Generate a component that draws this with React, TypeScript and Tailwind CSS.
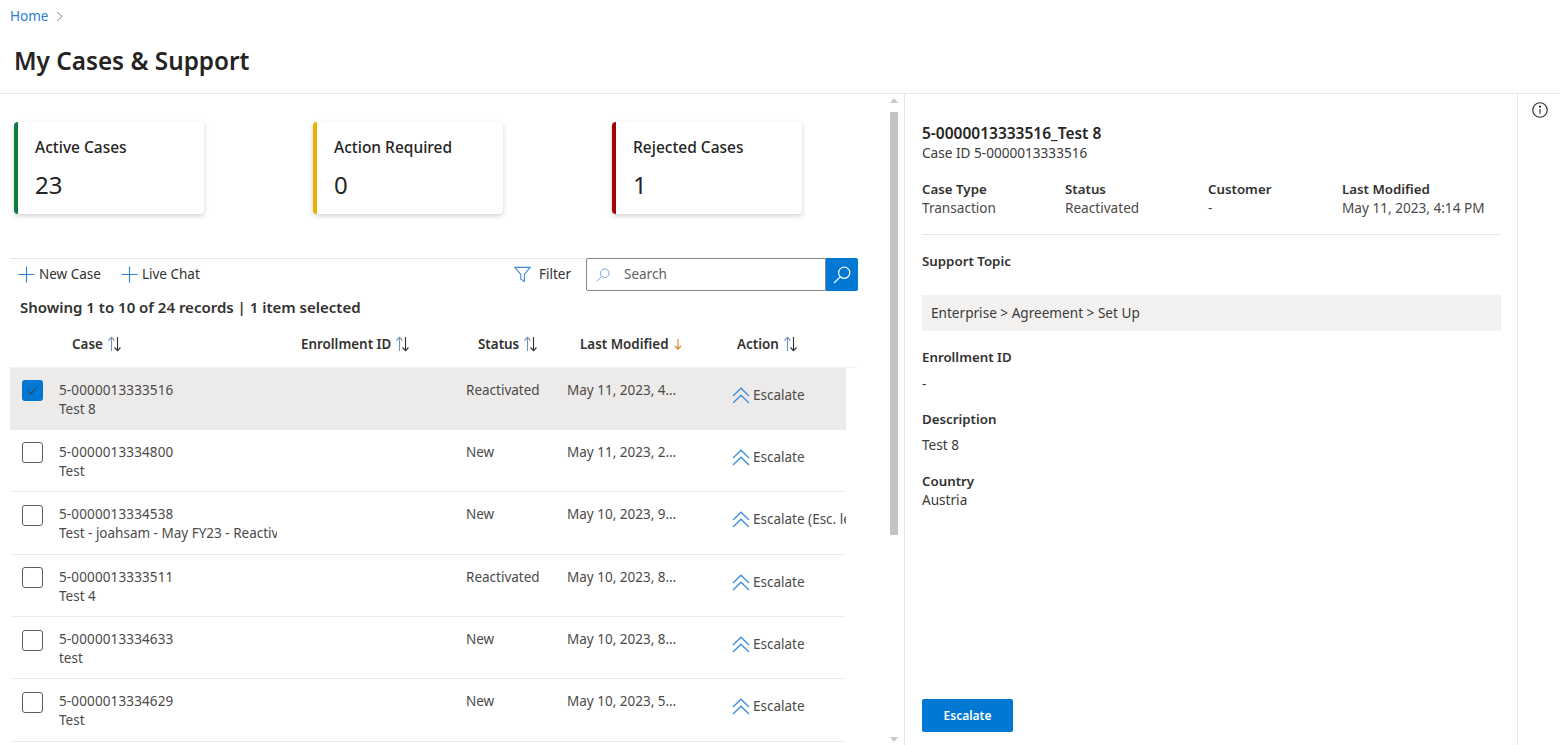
function Plus() {
  return (
    <svg width="17" height="17" viewBox="0 0 17 17" className="shrink-0" fill="none" stroke="#2f7fd6" strokeWidth="1.1">
      <path d="M0.5 8.5H16.5M8.5 0.5V16.5" />
    </svg>
  );
}
function Sort() {
  return (
    <svg width="15" height="16" viewBox="0 0 15 16" className="shrink-0" fill="none" strokeWidth="1.1">
      <path d="M4.5 15V1.5M1.5 4.5L4.5 1.3L7.5 4.5" stroke="#6f94b8" />
      <path d="M10.5 1V14.5M7.5 11.5L10.5 14.7L13.5 11.5" stroke="#323130" />
    </svg>
  );
}
function Chevrons() {
  return (
    <svg width="18" height="17" viewBox="0 0 18 17" className="shrink-0" fill="none" stroke="#3f8ddd" strokeWidth="1.3">
      <path d="M1 9L9 1.2L17 9M1 16L9 8.2L17 16" />
    </svg>
  );
}
function SearchGlyph({ color, size }: { color: string; size: number }) {
  return (
    <svg width={size} height={size} viewBox="0 0 18 18" className="shrink-0" fill="none" stroke={color} strokeWidth="1.2">
      <circle cx="11.2" cy="6.8" r="5.6" />
      <path d="M7.2 10.8L1 17" />
    </svg>
  );
}
function Head({ label, orange }: { label: string; orange?: boolean }) {
  return (
    <div className="flex items-center gap-[4px]">
      <span>{label}</span>
      {orange ? (
        <svg width="10" height="14" viewBox="0 0 10 14" fill="none" stroke="#d9822b" strokeWidth="1.1" className="shrink-0">
          <path d="M5 2V12M2 9L5 12.2L8 9" />
        </svg>
      ) : (
        <Sort />
      )}
    </div>
  );
}
function StatCard({ title, value, bar }: { title: string; value: string; bar: string }) {
  return (
    <div className={`w-[190px] h-[92px] bg-white rounded-[4px] border-l-[4px] ${bar} shadow-[0_2px_5px_rgba(0,0,0,0.18)] pl-[17px] pt-[15px]`}>
      <div className="text-[15.5px] leading-[20px] font-medium text-[#252423]">{title}</div>
      <div className="text-[24px] leading-[32px] mt-[12px] text-[#252423]">{value}</div>
    </div>
  );
}
const rows = [
  { id: "5-0000013333516", sub: "Test 8", status: "Reactivated", date: "May 11, 2023, 4:14 PM", action: "Escalate", selected: true },
  { id: "5-0000013334800", sub: "Test", status: "New", date: "May 11, 2023, 2:10 PM", action: "Escalate" },
  { id: "5-0000013334538", sub: "Test - joahsam - May FY23 - Reactivated", status: "New", date: "May 10, 2023, 9:21 PM", action: "Escalate (Esc. level 1)" },
  { id: "5-0000013333511", sub: "Test 4", status: "Reactivated", date: "May 10, 2023, 8:45 PM", action: "Escalate" },
  { id: "5-0000013334633", sub: "test", status: "New", date: "May 10, 2023, 8:02 PM", action: "Escalate" },
  { id: "5-0000013334629", sub: "Test", status: "New", date: "May 10, 2023, 5:37 PM", action: "Escalate" },
];
function Row({ r }: { r: (typeof rows)[number] }) {
  return (
    <div className={`w-[836px] h-[62.4px] shrink-0 grid grid-cols-[49px_407px_101px_165px_114px] border-b border-[#edebe9] text-[13.5px] leading-[19px] text-[#4b4a49] ${r.selected ? "bg-[#edebe9]" : "bg-white"}`}>
      <div className="pl-[12px] pt-[12.5px]">
        {r.selected ? (
          <div className="w-[21px] h-[21px] rounded-[3px] bg-[#0078d4] flex items-center justify-center">
            <svg width="13" height="13" viewBox="0 0 13 13" fill="none" stroke="#2c4f70" strokeWidth="1.2"><path d="M2 7L5 10L11 3" /></svg>
          </div>
        ) : (
          <div className="w-[21px] h-[21px] rounded-[3px] border border-[#605e5c] bg-white" />
        )}
      </div>
      <div className="pt-[13px]">
        <div className="tracking-[0.13px]">{r.id}</div>
        <div className="w-[218px] overflow-hidden whitespace-nowrap">{r.sub}</div>
      </div>
      <div className="pt-[13px]">{r.status}</div>
      <div className="pt-[13px]"><div className="w-[111px] truncate">{r.date}</div></div>
      <div className="pt-[19px] flex items-start gap-[3px] overflow-hidden whitespace-nowrap">
        <Chevrons />
        <span className="leading-[17px]">{r.action}</span>
      </div>
    </div>
  );
}
function Field({ label, value }: { label: string; value: string }) {
  return (
    <div>
      <div className="text-[13.3px] leading-[19px] font-semibold text-[#323130]">{label}</div>
      <div className="text-[13.6px] leading-[18px] text-[#4b4a49]">{value}</div>
    </div>
  );
}
export default function App() {
  return (
    <div className="w-[1560px] h-[745px] overflow-hidden bg-white flex flex-col font-['Noto_Sans',sans-serif]">
      <header className="h-[94px] shrink-0 border-b border-[#e6e6e6] pl-[10px]">
        <div className="flex items-center gap-[8px] pt-[6px] h-[26px] text-[13.5px] text-[#2b7cd3]">
          <span>Home</span>
          <svg width="7" height="11" viewBox="0 0 7 11" fill="none" stroke="#8a8886" strokeWidth="1"><path d="M1 1L6 5.5L1 10" /></svg>
        </div>
        <h1 className="pl-[4px] mt-[19px] text-[24.3px] leading-[32px] font-semibold text-[#252423]">My Cases &amp; Support</h1>
      </header>
      <div className="flex flex-1 min-h-0">
        <div className="w-[905px] shrink-0 border-r border-[#e6e6e6] flex">
          <main className="w-[890px] shrink-0 pl-[10px] overflow-hidden flex flex-col">
            <div className="flex gap-[109px] pl-[4px] pt-[28px]">
              <StatCard title="Active Cases" value="23" bar="border-[#107c41]" />
              <StatCard title="Action Required" value="0" bar="border-[#eaaf00]" />
              <StatCard title="Rejected Cases" value="1" bar="border-[#a80000]" />
            </div>
            <div className="mt-[44px] w-[848px] h-[33px] shrink-0 border-t border-[#e6e6e6] flex items-center text-[13.5px] text-[#323130]">
              <button className="flex items-center gap-[4px] ml-[8px] -mt-[2px]"><Plus /><span>New Case</span></button>
              <button className="flex items-center gap-[4px] ml-[20px] -mt-[2px]"><Plus /><span>Live Chat</span></button>
              <button className="flex items-center gap-[8px] ml-auto mr-[15px] -mt-[2px]">
                <svg width="17" height="17" viewBox="0 0 18 17" fill="none" stroke="#3f8ddd" strokeWidth="1.2"><path d="M1 1H17L11 8.5V15.8L7.2 13.5V8.5Z" /></svg>
                <span>Filter</span>
              </button>
              <div className="w-[240px] h-[33px] -mt-px border border-[#8a8886] rounded-l-[2px] flex items-center pl-[9px] gap-[14px] text-[#605e5c] bg-white">
                <SearchGlyph color="#6f9fe0" size={14} />
                <span>Search</span>
              </div>
              <div className="w-[32px] h-[33px] -mt-px bg-[#0078d4] rounded-r-[2px] flex items-center justify-center">
                <SearchGlyph color="#ffffff" size={18} />
              </div>
            </div>
            <div className="mt-[5px] pl-[10px] h-[24px] shrink-0 text-[15px] leading-[22px] font-semibold text-[#323130]">Showing 1 to 10 of 24 records | 1 item selected</div>
            <div className="w-[848px] h-[47.5px] pt-[2px] shrink-0 border-b border-[#f3f2f1] grid grid-cols-[62px_229px_177px_102px_157px_1fr] items-center text-[13.4px] font-semibold text-[#323130]">
              <div />
              <Head label="Case" />
              <Head label="Enrollment ID" />
              <Head label="Status" />
              <Head label="Last Modified" orange />
              <Head label="Action" />
            </div>
            <div className="flex flex-col">
              {rows.map((r) => <Row key={r.id} r={r} />)}
            </div>
          </main>
          <div className="w-[8px] shrink-0 flex flex-col items-center pt-[4px] pb-[3px]">
            <svg width="8" height="5" viewBox="0 0 8 5" fill="#c8c6c4"><path d="M4 0L8 5H0Z" /></svg>
            <div className="w-[8px] h-[423px] mt-[9px] bg-[#c2c2c2] rounded-[1px]" />
            <svg width="8" height="5" viewBox="0 0 8 5" fill="#c8c6c4" className="mt-auto"><path d="M4 5L8 0H0Z" /></svg>
          </div>
        </div>
        <aside className="w-[613px] shrink-0 border-r border-[#e6e6e6] pl-[17px] pr-[16px] pt-[29px] flex flex-col">
          <div className="text-[15.5px] leading-[20px] font-semibold text-[#252423]">5-0000013333516_Test 8</div>
          <div className="text-[13.6px] leading-[20px] text-[#3b3a39]">Case ID 5-0000013333516</div>
          <div className="mt-[17px] pb-[17px] border-b border-[#e6e6e6] grid grid-cols-[143px_143px_134px_1fr]">
            <Field label="Case Type" value="Transaction" />
            <Field label="Status" value="Reactivated" />
            <Field label="Customer" value="-" />
            <Field label="Last Modified" value="May 11, 2023, 4:14 PM" />
          </div>
          <div className="mt-[16px] text-[13.3px] leading-[20px] font-semibold text-[#323130]">Support Topic</div>
          <div className="mt-[24px] h-[36px] bg-[#f3f2f1] pl-[9px] pt-[1px] flex items-center text-[13.6px] text-[#3b3a39]">Enterprise &gt; Agreement &gt; Set Up</div>
          <div className="mt-[16px] text-[13.3px] leading-[20px] font-semibold text-[#323130]">Enrollment ID</div>
          <div className="mt-[7px] text-[13.6px] leading-[20px] text-[#3b3a39]">-</div>
          <div className="mt-[15px] text-[13.3px] leading-[20px] font-semibold text-[#323130]">Description</div>
          <div className="mt-[6px] text-[13.6px] leading-[20px] text-[#3b3a39]">Test 8</div>
          <div className="mt-[16px] text-[13.3px] leading-[20px] font-semibold text-[#323130]">Country</div>
          <div className="text-[13.6px] leading-[18px] text-[#3b3a39]">Austria</div>
          <button className="mt-auto mb-[13px] w-[91px] h-[33px] pt-[1px] bg-[#0078d4] rounded-[2px] text-[12px] font-semibold text-white">Escalate</button>
        </aside>
        <div className="flex-1 flex justify-center pt-[8px] pl-[2px]">
          <svg width="16" height="16" viewBox="0 0 15 15" fill="none" stroke="#323130" strokeWidth="1.1">
            <circle cx="7.5" cy="7.5" r="6.8" />
            <path d="M7.5 6.6V11" />
            <circle cx="7.5" cy="4.4" r="0.5" fill="#323130" />
          </svg>
        </div>
      </div>
    </div>
  );
}
